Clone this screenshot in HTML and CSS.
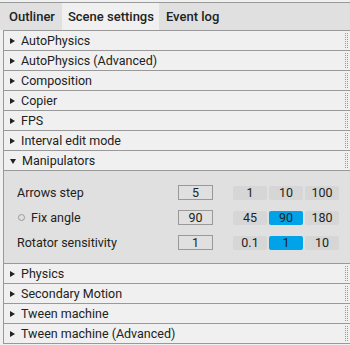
FILE: index.html
```html
<!DOCTYPE html>
<html>
<head>
<meta name="viewport" content="width=device-width, initial-scale=1">
<link rel="stylesheet" href="styles.css">
</head>
<body>
<div class="tabs">
  <div class="tab">Outliner</div>
  <div class="tab active">Scene settings</div>
  <div class="tab">Event log</div>
</div>

<div class="list">
  <div class="row"><span class="arrow"></span>AutoPhysics<span class="grip"></span></div>
  <div class="row"><span class="arrow"></span>AutoPhysics (Advanced)<span class="grip"></span></div>
  <div class="row"><span class="arrow"></span>Composition<span class="grip"></span></div>
  <div class="row"><span class="arrow"></span>Copier<span class="grip"></span></div>
  <div class="row"><span class="arrow"></span>FPS<span class="grip"></span></div>
  <div class="row"><span class="arrow"></span>Interval edit mode<span class="grip"></span></div>
  <div class="row"><span class="arrow open"></span>Manipulators<span class="grip"></span></div>

  <div class="section">
    <div class="field">
      <div class="label">Arrows step</div>
      <div class="box">5</div>
      <div class="btns">
        <div class="btn">1</div>
        <div class="btn">10</div>
        <div class="btn">100</div>
      </div>
    </div>
    <div class="field">
      <div class="label"><span class="radio"></span>Fix angle</div>
      <div class="box">90</div>
      <div class="btns">
        <div class="btn">45</div>
        <div class="btn on">90</div>
        <div class="btn">180</div>
      </div>
    </div>
    <div class="field">
      <div class="label">Rotator sensitivity</div>
      <div class="box">1</div>
      <div class="btns">
        <div class="btn">0.1</div>
        <div class="btn on">1</div>
        <div class="btn">10</div>
      </div>
    </div>
  </div>

  <div class="row"><span class="arrow"></span>Physics<span class="grip"></span></div>
  <div class="row"><span class="arrow"></span>Secondary Motion<span class="grip"></span></div>
  <div class="row"><span class="arrow"></span>Tween machine<span class="grip"></span></div>
  <div class="row last"><span class="arrow"></span>Tween machine (Advanced)<span class="grip"></span></div>
</div>
</body>
</html>
```

FILE: styles.css
```css
body{
    margin: 0;
    background: #f0f0f0;
    font-family: Roboto, "Liberation Sans", sans-serif;
    color: #222;
}

.tabs{
    display: flex;
    margin-top: 2px;
    height: 27px;
    border-top: 1px solid #999;
    background: #e0e0e0;
}

.tab{
    display: flex;
    align-items: center;
    padding: 0 7px 0 9px;
    font-size: 13px;
    font-weight: 500;
}

.tab.active{
    background: #f0f0f0;
    padding: 0 5px 0 6px;
}

.tab.active + .tab{
    padding-left: 7px;
}

.list{
    margin-left: 3px;
    border-left: 1px solid #999;
}

.row{
    display: flex;
    align-items: center;
    height: 19px;
    border-top: 1px solid #999;
    font-size: 12.5px;
    background: #f0f0f0;
}

.row.last{
    border-bottom: 1px solid #999;
}

.arrow{
    width: 0;
    height: 0;
    margin: 0 6px 0 6px;
    border-left: 5px solid #222;
    border-top: 3px solid transparent;
    border-bottom: 3px solid transparent;
}

.arrow.open{
    margin: 1px 6px 0 6px;
    border-left: 3px solid transparent;
    border-right: 3px solid transparent;
    border-top: 5px solid #222;
    border-bottom: 0;
}

/* dotted resize grip on the right */
.grip{
    margin-left: auto;
    margin-right: 2px;
    width: 3px;
    height: 15px;
    background-image: linear-gradient(90deg, transparent 1px, #f0f0f0 1px),
                      linear-gradient(#999 1px, transparent 1px);
    background-size: 2px 2px;
}

.section{
    border-top: 1px solid #999;
    background: #e0e0e0;
    padding: 9px 0 8px 13px;
}

.field{
    display: flex;
    align-items: center;
    height: 25px;
    font-size: 12.5px;
}

.label{
    display: flex;
    align-items: center;
    width: 161px;
}

.radio{
    width: 5px;
    height: 5px;
    border: 1px solid #999;
    border-radius: 50%;
    margin: 0 6px 0 1px;
}

.box{
    width: 33px;
    height: 13px;
    line-height: 13px;
    border: 1px solid #999;
    text-align: center;
}

.btns{
    display: flex;
    gap: 2px;
    margin-left: 20px;
}

.btn{
    width: 34px;
    height: 14px;
    line-height: 14px;
    border-radius: 2px;
    background: #d6d6d6;
    text-align: center;
}

.btn.on{
    background: #00a2e8;
}
```
